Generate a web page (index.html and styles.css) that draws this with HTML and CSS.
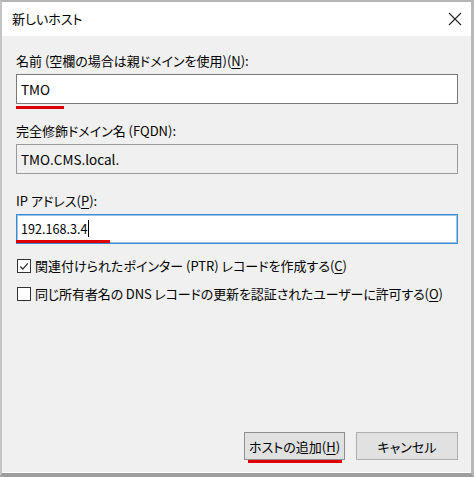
FILE: index.html
```html
<!DOCTYPE html>
<html lang="ja">
<head>
<meta charset="utf-8">
<link rel="stylesheet" href="styles.css">
</head>
<body>
<div class="window">
  <div class="titlebar">
    <span class="title">新しいホスト</span>
    <svg class="close" width="14" height="14" viewBox="0 0 14 14"><path d="M1 1 L13 13 M13 1 L1 13" stroke="#222" stroke-width="1.1" fill="none"/></svg>
  </div>
  <div class="content">
    <div class="label">名前 (空欄の場合は親ドメインを使用)(<u>N</u>):</div>
    <div class="field">
      <div class="input">TMO</div>
      <div class="mark mark-name"></div>
    </div>
    <div class="label gap">完全修飾ドメイン名 (FQDN):</div>
    <div class="field">
      <div class="input readonly">TMO.CMS.local.</div>
    </div>
    <div class="label gap">IP アドレス(<u>P</u>):</div>
    <div class="field">
      <div class="input focused">192.168.3.4<span class="caret"></span></div>
      <div class="mark mark-ip"></div>
    </div>
    <div class="check first">
      <span class="box"><svg width="13" height="13" viewBox="0 0 13 13"><path d="M2.5 6.5 L5.2 9.3 L10.6 3.2" stroke="#222" stroke-width="1.2" fill="none"/></svg></span>
      <span>関連付けられたポインター (PTR) レコードを作成する(<u>C</u>)</span>
    </div>
    <div class="check">
      <span class="box"></span>
      <span class="tight">同じ所有者名の DNS レコードの更新を認証されたユーザーに許可する(<u>O</u>)</span>
    </div>
    <div class="buttons">
      <div class="btnwrap">
        <div class="button default">ホストの追加(<u>H</u>)</div>
        <div class="mark mark-btn"></div>
      </div>
      <div class="button">キャンセル</div>
    </div>
  </div>
</div>
</body>
</html>
```

FILE: styles.css
```css
* { box-sizing: border-box; }
html, body {
  margin: 0;
  padding: 0;
  background: #a9a9a9;
}
body {
  width: 474px;
  height: 477px;
  overflow: hidden;
  font-family: "Noto Sans CJK JP", "Noto Sans", sans-serif;
  font-feature-settings: "palt";
  font-size: 13px;
  color: #000;
}
.window {
  width: 474px;
  height: 477px;
  border-top: 2px solid #b4b4b4;
  border-left: 2px solid #c4c4c4;
  border-right: 3px solid #b8b8b8;
  border-bottom: 4px solid #9e9e9e;
  display: flex;
  flex-direction: column;
  background: #f0f0f0;
}
.titlebar {
  height: 34px;
  background: #ffffff;
  display: flex;
  align-items: center;
  justify-content: space-between;
  padding: 0 9px 2px 10px;
  flex: none;
}
.title {
  font-size: 13px;
}
.close { display: block; margin-top: 1px; }
.content {
  flex: 1;
  display: flex;
  flex-direction: column;
  padding: 15px 13px 12px 14px;
  border-bottom: 1px solid #ffffff;
}
.label {
  line-height: 20px;
  height: 20px;
  margin-bottom: 3px;
  white-space: nowrap;
}
.label.gap { margin-top: 17px; }
.field { position: relative; }
.input {
  height: 30px;
  background: #fff;
  border: 1px solid #7a7a7a;
  padding: 0 4px;
  line-height: 28px;
  font-size: 13.5px;
  white-space: nowrap;
}
.input.readonly {
  background: #f0f0f0;
  border-color: #9a9a9a;
}
.input.focused {
  border: 1px solid #3b8ad4;
  box-shadow: inset 0 0 0 1px #9cc3e8;
  font-size: 12.6px;
}
.caret {
  display: inline-block;
  width: 1px;
  height: 17px;
  background: #000;
  vertical-align: -3px;
  margin-left: 1px;
}
.mark {
  position: absolute;
  height: 3px;
  background: #e00000;
}
.mark-name { left: 0; top: 32px; width: 48px; }
.mark-ip { left: 0; top: 26px; width: 94px; }
.check {
  display: flex;
  align-items: center;
  gap: 2px;
  line-height: 20px;
  white-space: nowrap;
}
.tight { letter-spacing: -0.12px; }
.check.first { margin-top: 12px; }
.check + .check { margin-top: 8px; }
.box {
  width: 14px;
  height: 14px;
  border: 1px solid #333;
  background: #fff;
  flex: none;
  margin-left: 1px;
  margin-right: 2px;
  display: flex;
  align-items: center;
  justify-content: center;
}
.box svg { display: block; }
.buttons {
  margin-top: auto;
  display: flex;
  justify-content: flex-end;
  gap: 11px;
}
.btnwrap { position: relative; }
.button {
  width: 102px;
  height: 28px;
  background: #e1e1e1;
  border: 1px solid #adadad;
  display: flex;
  align-items: center;
  justify-content: center;
  font-size: 13px;
  white-space: nowrap;
}
.button.default { width: 101px; border-color: #8f8f8f; }
.mark-btn { left: 4px; top: 28px; width: 94px; }
u { text-underline-offset: 2px; }
```
